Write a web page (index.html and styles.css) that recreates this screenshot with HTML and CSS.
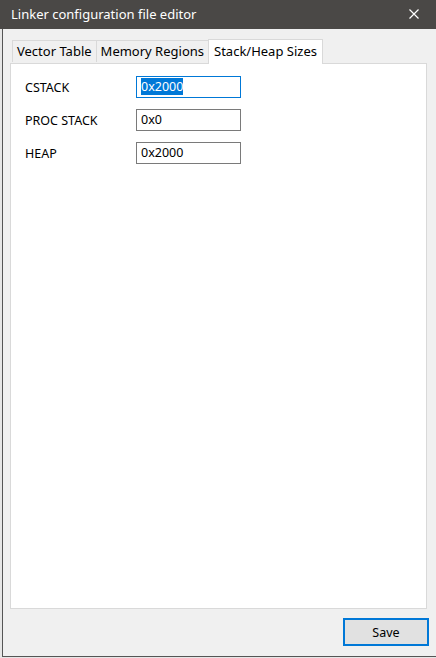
FILE: index.html
```html
<!DOCTYPE html>
<html>
<head>
<meta charset="utf-8">
<link rel="stylesheet" href="styles.css">
</head>
<body>
<div class="window">
  <div class="titlebar">
    <span class="title">Linker configuration file editor</span>
    <svg class="close" width="10" height="10" viewBox="0 0 10 10"><path d="M0.5 0.5L9.5 9.5M9.5 0.5L0.5 9.5" stroke="#fff" stroke-width="1.2"/></svg>
  </div>
  <div class="frame">
    <div class="content">
      <div class="tabs">
        <div class="tab">Vector Table</div>
        <div class="tab">Memory Regions</div>
        <div class="tab active">Stack/Heap Sizes</div>
      </div>
      <div class="panel">
        <div class="row"><span class="label">CSTACK</span><div class="field focus"><span class="sel">0x2000</span></div></div>
        <div class="row"><span class="label">PROC STACK</span><div class="field">0x0</div></div>
        <div class="row"><span class="label">HEAP</span><div class="field">0x2000</div></div>
      </div>
      <div class="footer">
        <button class="save">Save</button>
      </div>
    </div>
  </div>
</div>
</body>
</html>
```
FILE: styles.css
```css
* { box-sizing: border-box; }
html, body { margin: 0; padding: 0; }
body {
  width: 436px;
  height: 658px;
  background: #e6e6e6;
  font-family: "Noto Sans", "Liberation Sans", sans-serif;
  font-size: 12px;
  color: #000;
  overflow: hidden;
}
.window { display: flex; flex-direction: column; height: 658px; }
.titlebar {
  height: 29px;
  background: #4a4846;
  display: flex;
  align-items: center;
  justify-content: space-between;
  padding: 0 17px 0 11px;
  color: #fff;
  flex: none;
}
.title { font-size: 13px; position: relative; top: -1px; }
.close { display: block; margin-top: -1px; }
.frame {
  margin-left: 2px;
  height: 628px;
  border-left: 1px solid #555;
  border-bottom: 1px solid #555;
  background: #f0f0f0;
  flex: none;
}
.content { display: flex; flex-direction: column; height: 627px; padding: 9px 9px 0 7px; }
.tabs { display: flex; padding-left: 2px; height: 25px; align-items: flex-end; position: relative; z-index: 1; }
.tab {
  height: 22px;
  border: 1px solid #d9d9d9;
  border-bottom: none;
  border-right: none;
  background: #f0f0f0;
  padding: 0 4px;
  line-height: 20px;
  font-size: 13px;
  margin-bottom: 1px;
}
.tab.active {
  height: 25px;
  background: #fff;
  border-right: 1px solid #d9d9d9;
  margin-bottom: -1px;
  line-height: 22px;
  padding: 0 5px 0 5px;
}
.panel {
  height: 546px;
  background: #fff;
  border: 1px solid #d9d9d9;
  padding: 12px 0 0 14px;
  display: flex;
  flex-direction: column;
  gap: 11px;
}
.row { display: flex; align-items: center; height: 22px; }
.label { width: 111px; font-size: 12.5px; }
.field {
  width: 105px;
  height: 22px;
  border: 1px solid #7a7a7a;
  padding-left: 4px;
  line-height: 20px;
  font-size: 12.5px;
}
.field.focus { border-color: #0078d7; }
.sel { background: #0078d7; color: #fff; display: inline-block; line-height: 17px; }
.footer { display: flex; justify-content: flex-end; padding-top: 9px; margin-right: -2px; }
.save {
  width: 86px;
  height: 28px;
  background: #e1e1e1;
  border: 2px solid #0078d7;
  font-family: "Noto Sans", "Liberation Sans", sans-serif;
  font-size: 12.5px;
  color: #000;
  padding: 0;
}
```
